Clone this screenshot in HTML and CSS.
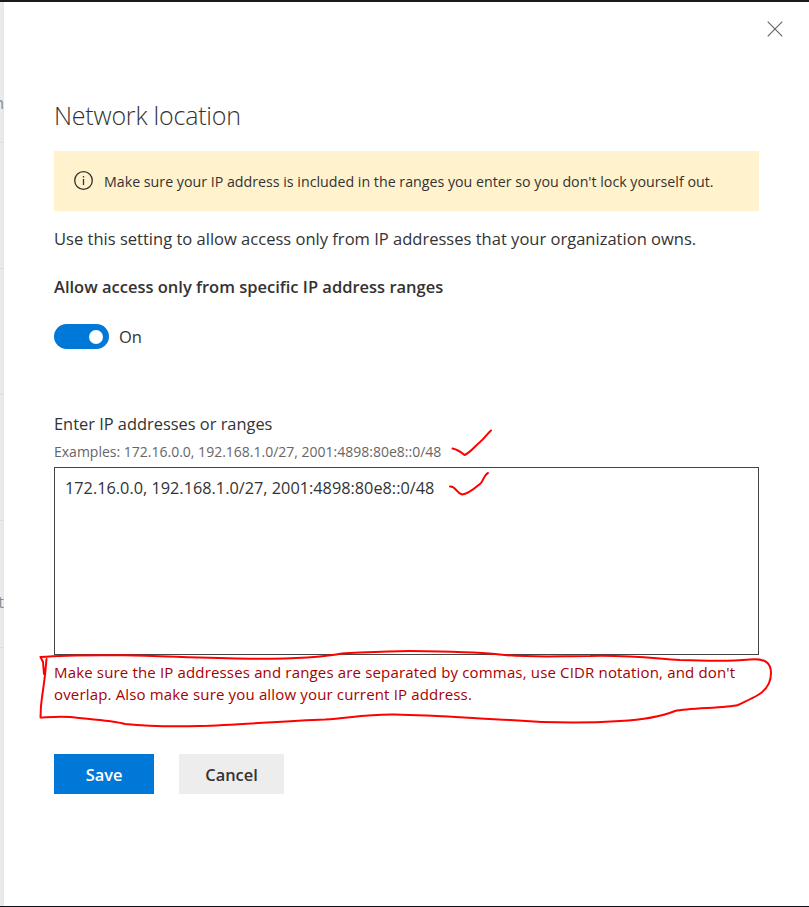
FILE: index.html
```
<!DOCTYPE html>
<html lang="en">
<head>
  <meta charset="UTF-8" />
  <title>Network location</title>
  <link rel="stylesheet" href="styles.css">
</head>
<body>
  <div class="backdrop">
    <div class="backdrop-row row-first"><span>n</span></div>
    <div class="backdrop-row"></div>
    <div class="backdrop-row"></div>
    <div class="backdrop-row"></div>
    <div class="backdrop-row row-last"><span>t</span></div>
  </div>

  <main class="panel">
    <div class="panel-top">
      <button class="close" aria-label="Close">
        <svg width="16" height="16" viewBox="0 0 16 16"><path d="M.7.7l14.6 14.6M15.3.7L.7 15.3"/></svg>
      </button>
    </div>

    <h1>Network location</h1>

    <div class="notice">
      <svg width="20" height="20" viewBox="0 0 20 20">
        <circle cx="9.5" cy="9.5" r="8.8"/>
        <path d="M9.500 8v6M9.500 5v1.500"/>
      </svg>
      <span>Make sure your IP address is included in the ranges you enter so you don't lock yourself out.</span>
    </div>

    <p class="description">Use this setting to allow access only from IP addresses that your organization owns.</p>
    <h2>Allow access only from specific IP address ranges</h2>

    <div class="toggle-row">
      <div class="toggle"><div class="knob"></div></div>
      <span>On</span>
    </div>

    <label class="field-label" for="ranges">Enter IP addresses or ranges</label>
    <p class="examples">Examples: 172.16.0.0, 192.168.1.0/27, 2001:4898:80e8::0/48</p>
    <textarea id="ranges" spellcheck="false">172.16.0.0, 192.168.1.0/27, 2001:4898:80e8::0/48</textarea>
    <p class="error">Make sure the IP addresses and ranges are separated by commas, use CIDR notation, and don't<br>overlap. Also make sure you allow your current IP address.</p>

    <div class="actions">
      <button class="save">Save</button>
      <button class="cancel">Cancel</button>
    </div>
  </main>

  <!-- red pen marks -->
  <svg class="marks" width="809" height="907" viewBox="0 0 809 907">
    <path d="M452.500 448.500C457 449.500 461 452 464.500 455C470 453 475 446 480 442C484 439 487 434 491 430.500"/>
    <path d="M450 486.500C456 486 456 493 462 494.500C469 494 476 487 481 483C484 479 484 475 488 473"/>
    <path d="M44 674L43 662L40.500 657C65 655 95 655 124 655.300C165 656 205 658.500 250 658.700C290 659 318 658 342 653.500C365 652.500 385 651 410 651C445 651.500 475 652 495 654C525 658 555 656 590 656C630 655 650 658 680 660C705 661 735 661 750 659.500C765 658 771 663 771 673C771 682 768 689 758 695C751 699 744 702 738 705C726 708 690 708 675 711C660 717 640 720 620 721C575 724 535 722 510 720C470 718 430 715 395 714.500C365 714 350 718 325 719.500C280 721 240 725 200 726C165 727 145 726 125 724C110 720 85 719 70 717C60 716 50 717 40.500 717.500L41 706C42 696 44 684 45 675L46.500 659"/>
  </svg>
</body>
</html>
```
FILE: styles.css
```
* {
  box-sizing: border-box;
}

body {
  display: flex;
  height: 907px;
  margin: 0;
  overflow: hidden;
  font-family: "Open Sans", "Noto Sans", sans-serif;
  color: #333;
  background: #fff;
  border-top: 2px solid #1b1a1b;
  border-bottom: 1px solid #071018;
}

h1, h2, p {
  margin: 0;
}

.backdrop {
  width: 4px;
  flex: none;
  overflow: hidden;
  background: linear-gradient(to right, #ececec, #e7e7e7);
}

.backdrop-row {
  height: 126px;
  border-bottom: 1px solid #ddd;
}

.row-first {
  height: 141px;
  padding-top: 90px;
}

.row-last {
  height: 127px;
  padding-top: 70px;
}

.backdrop-row span {
  display: block;
  width: 4px;
  direction: rtl;
  font-size: 16px;
  line-height: 22px;
  color: #8b8b8b;
}

.panel {
  flex: 1;
  padding: 0 50px;
}

.panel-top {
  display: flex;
  justify-content: flex-end;
  height: 93px;
  padding-top: 19px;
  margin-right: -24px;
}

button {
  border: 0;
  padding: 0;
  font-family: inherit;
}

.close {
  width: 16px;
  height: 16px;
  background: none;
}

.close svg {
  display: block;
  fill: none;
  stroke: #666;
  stroke-width: 1.2;
}

h1 {
  height: 56px;
  font-size: 25px;
  font-weight: 300;
  line-height: 40px;
  letter-spacing: -0.2px;
  white-space: nowrap;
}

.notice {
  display: flex;
  align-items: center;
  height: 60px;
  padding-left: 20px;
  gap: 10px;
  font-size: 14.23px;
  white-space: nowrap;
  background: #fff2cc;
}

.notice svg {
  fill: none;
  stroke: #333;
  stroke-width: 1.3;
}

.description {
  margin-top: 16px;
  font-size: 16.55px;
  line-height: 24px;
  white-space: nowrap;
}

h2 {
  margin-top: 24px;
  font-size: 16.5px;
  font-weight: 600;
  line-height: 24px;
  white-space: nowrap;
}

.toggle-row {
  display: flex;
  align-items: center;
  gap: 10px;
  margin-top: 25px;
  height: 25px;
  font-size: 16.5px;
}

.toggle {
  display: flex;
  align-items: center;
  justify-content: flex-end;
  width: 55px;
  height: 25px;
  padding-right: 6px;
  border-radius: 13px;
  background: #0078d7;
}

.knob {
  width: 14px;
  height: 14px;
  border-radius: 50%;
  background: #fff;
}

.field-label {
  display: block;
  margin-top: 63px;
  font-size: 16.4px;
  line-height: 24px;
}

.examples {
  margin-top: 5px;
  height: 26px;
  font-size: 14px;
  line-height: 22px;
  color: #666;
  white-space: nowrap;
}

textarea {
  display: block;
  width: 705px;
  height: 188px;
  padding: 8px 10px;
  border: 1px solid #444;
  resize: none;
  outline: 0;
  font-family: inherit;
  font-size: 16.3px;
  line-height: 24px;
  color: #333;
}

.error {
  margin-top: 6px;
  font-size: 15px;
  line-height: 22px;
  letter-spacing: 0.16px;
  color: #a80000;
  white-space: nowrap;
}

.actions {
  display: flex;
  gap: 25px;
  margin-top: 49px;
}

.actions button {
  height: 40px;
  font-size: 16.4px;
  font-weight: 600;
}

.save {
  width: 100px;
  color: #fff;
  background: #0078d7;
}

.cancel {
  width: 105px;
  color: #333;
  background: #ededed;
}

.marks {
  position: absolute;
  top: 0;
  left: 0;
  fill: none;
  stroke: #f00;
  stroke-width: 2;
  stroke-linejoin: round;
  stroke-linecap: round;
  pointer-events: none;
}
```
